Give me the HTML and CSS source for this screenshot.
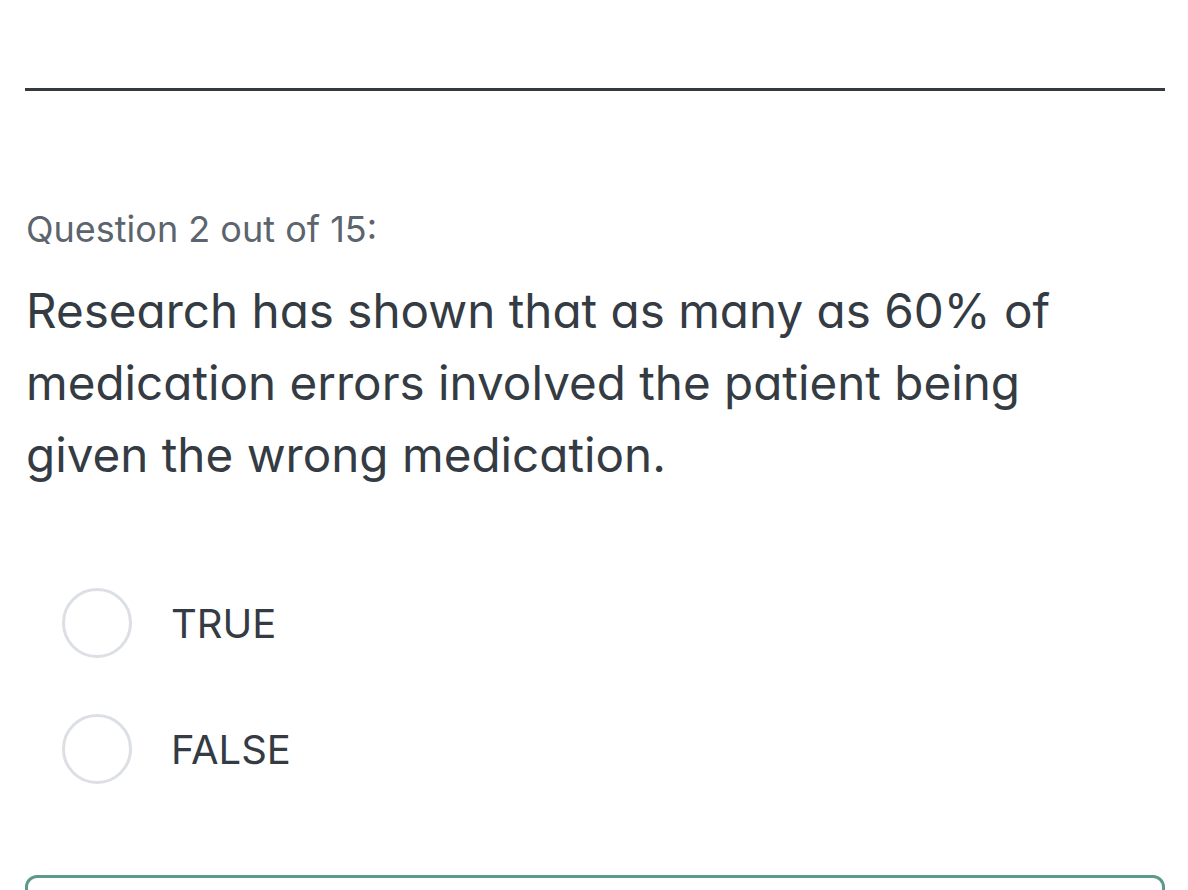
FILE: index.html
```html
<!DOCTYPE html>
<html lang="en">
<head>
    <meta charset="UTF-8">
    <meta name="viewport" content="width=device-width, initial-scale=1.0">
    <title>Quiz</title>
    <link rel="stylesheet" href="styles.css">
</head>
<body>
    <main class="quiz">
        <hr class="divider">

        <section class="question">
            <h3 class="question-count">Question 2 out of 15:</h3>
            <p class="question-text">Research has shown that as many as 60% of medication errors involved the patient being given the wrong medication.</p>

            <ul class="answers">
                <li class="answer">
                    <span class="radio"></span>
                    <span class="answer-label">TRUE</span>
                </li>
                <li class="answer">
                    <span class="radio"></span>
                    <span class="answer-label">FALSE</span>
                </li>
            </ul>
        </section>

        <div class="next-box"></div>
    </main>
</body>
</html>
```

FILE: styles.css
```css
body {
    margin: 0;
    font-family: Inter, "Noto Sans", sans-serif;
    font-feature-settings: "cv11";
    background: #fff;
    color: #343b43;
    overflow: hidden;
}

.quiz {
    padding: 88px 23px 0 25px;
}

.divider {
    margin: 0;
    border: none;
    border-top: 3px solid #343a40;
}

.question-count {
    margin: 116px 0 0 1px;
    font-size: 36px;
    font-weight: 400;
    line-height: 44px;
    color: #5c646d;
}

.question-text {
    max-width: 1080px;
    margin: 24px 0 0 1px;
    font-size: 47.6px;
    line-height: 72px;
}

.answers {
    list-style: none;
    margin: 97px 0 0;
    padding: 0 0 0 37px;
}

.answer {
    display: flex;
    align-items: center;
    gap: 39px;
    height: 70px;
    margin-bottom: 56px;
}

.radio {
    width: 64px;
    height: 64px;
    border: 3px solid #dcdfe3;
    border-radius: 50%;
}

.answer-label {
    font-size: 40px;
}

.next-box {
    margin-top: 91px;
    height: 60px;
    border: 3px solid #5e9a8c;
    border-radius: 12px;
}
```
